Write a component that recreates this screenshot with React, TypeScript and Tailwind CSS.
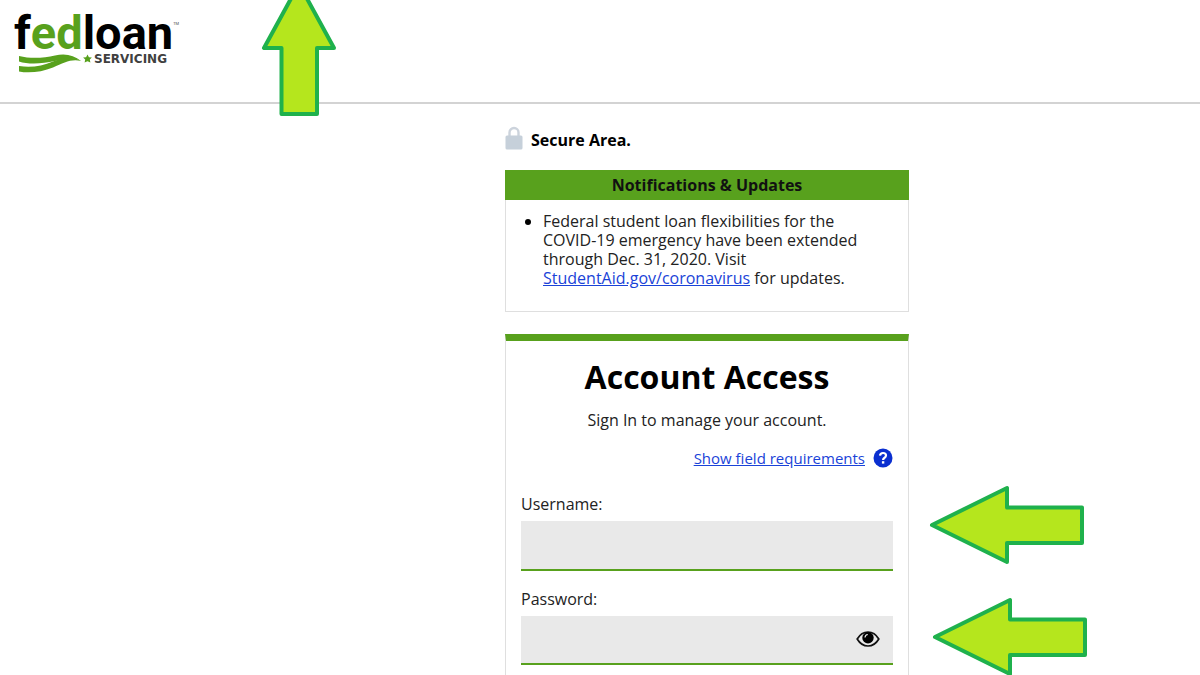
import type { ReactNode } from 'react';

function Logo() {
  return (
    <a href="#home" aria-label="FedLoan Servicing home" className="block w-[166px] text-black no-underline">
      <span className="flex items-start font-['Roboto',sans-serif] text-[47px] leading-[40px] font-bold">
        f<span className="text-[#58a11d]">ed</span>loan
        <span className="font-['Roboto',sans-serif] text-[4px] leading-[22px] font-normal text-neutral-600">TM</span>
      </span>
      <span className="flex items-start">
        <svg viewBox="0 0 78 20" className="h-5 w-[78px] shrink-0" fill="#58a11d" aria-hidden="true">
          <path d="M5 3C17 6 30 5 41 2.500C51 0 60 2 67 8C57 3.500 50 6 41 8C28 11 14 11.500 5 8.500Z" />
          <path d="M5 13C17 15 28 13 39 8.500C49 4.500 58 3 67 8C57 5.500 50 10 39 14.500C28 19 15 20.500 5 18.500Z" />
          <path d="M73.500 1.500L74.900 4.200L77.900 4.500L75.800 6.600L76.400 9.600L73.500 8.200L70.600 9.600L71.200 6.600L69.100 4.500L72.100 4.200Z" />
        </svg>
        <span className="ml-[2px] font-['DejaVu_Sans',sans-serif] text-[12px] leading-[12px] font-bold text-neutral-700">
          SERVICING
        </span>
      </span>
    </a>
  );
}

function UpArrow() {
  return (
    <svg viewBox="0 0 76 118" className="absolute top-0 left-[261px] h-[118px] w-[76px]" aria-hidden="true">
      <path
        d="M38 -16L3 48H20.500V114H56V48H73Z"
        fill="#b5e61d"
        stroke="#1fb14c"
        strokeWidth="4"
        strokeLinejoin="round"
      />
    </svg>
  );
}

function LeftArrow() {
  return (
    <svg viewBox="0 0 156 80" className="h-20 w-[156px]" aria-hidden="true">
      <path
        d="M3 40L78 3V22.500H153V58H78V77Z"
        fill="#b5e61d"
        stroke="#1fb14c"
        strokeWidth="4"
        strokeLinejoin="round"
      />
    </svg>
  );
}

function LockIcon() {
  return (
    <svg viewBox="0 0 18 24" className="h-6 w-[18px]" aria-hidden="true">
      <path d="M4.500 11V6.500a4.500 4.500 0 0 1 9 0V11" fill="none" stroke="#ccd3dc" strokeWidth="2.400" />
      <rect x="0.500" y="9.500" width="17" height="14" rx="1.500" fill="#c6d0da" />
    </svg>
  );
}

function HelpIcon() {
  return (
    <svg viewBox="0 0 20 20" className="h-5 w-5" aria-hidden="true">
      <circle cx="10" cy="10" r="9.500" fill="#0a2fd0" />
      <path
        d="M7 7.700C7.200 5.800 8.400 5 10 5c1.800 0 3 1 3 2.500 0 1.300-.8 1.900-1.700 2.500-.9.600-1.200 1-1.200 2"
        fill="none"
        stroke="#fff"
        strokeWidth="2.200"
      />
      <rect x="8.900" y="13.200" width="2.400" height="2.400" fill="#fff" />
    </svg>
  );
}

function EyeIcon() {
  return (
    <svg viewBox="0 0 24 18" className="h-[18px] w-6" aria-hidden="true">
      <path
        d="M1.200 9C4 4.200 7.700 2 12 2s8 2.200 10.800 7C20 13.800 16.300 16 12 16S4 13.800 1.200 9Z"
        fill="none"
        stroke="#111"
        strokeWidth="1.700"
      />
      <circle cx="12" cy="7.800" r="5.700" fill="#000" />
      <path d="M9 7.500C9.100 5.700 10.100 4.700 11.800 4.500" fill="none" stroke="#e9e9e9" strokeWidth="1.200" />
    </svg>
  );
}

type FieldProps = {
  id: string;
  label: string;
  type: string;
  heightClass: string;
  arrowClass: string;
  children?: ReactNode;
};

function Field({ id, label, type, heightClass, arrowClass, children }: FieldProps) {
  return (
    <div>
      <label htmlFor={id} className="block text-[16px] leading-5">
        {label}
      </label>
      <div className="relative mt-[7px]">
        <input
          id={id}
          type={type}
          className={`block w-full border-b-2 border-[#58a11d] bg-[#e9e9e9] px-3 outline-none ${heightClass}`}
        />
        {children}
        <div className={`absolute left-full ${arrowClass}`}>
          <LeftArrow />
        </div>
      </div>
    </div>
  );
}

export default function App() {
  return (
    <div className="h-screen overflow-hidden bg-white font-['Open_Sans',sans-serif] text-[16px] text-[#222]">
      <header className="relative border-b-2 border-[#d3d3d3] px-[14px] pt-[13px] pb-[29px]">
        <Logo />
        <UpArrow />
      </header>

      <main className="flex justify-center pt-[22px] pl-[214px]">
        <div className="w-full max-w-[404px]">
          <div className="flex items-center gap-2">
            <LockIcon />
            <p className="pt-1 text-[16px] leading-5 font-bold text-black">Secure Area.</p>
          </div>

          <section className="mt-5 border border-[#dfdfdf]">
            <h2 className="-mx-px -mt-px bg-[#58a11d] text-center text-[16px] leading-[30px] font-bold text-[#111]">
              Notifications &amp; Updates
            </h2>
            <ul className="list-disc pt-3 pr-10 pb-[23px] pl-[37px] marker:text-black">
              <li className="text-[16px] leading-[19px]">
                Federal student loan flexibilities for the COVID-19 emergency have been extended through Dec. 31, 2020.
                Visit{' '}
                <a href="#coronavirus" className="text-[#1a43d8] underline">
                  StudentAid.gov/coronavirus
                </a>{' '}
                for updates.
              </li>
            </ul>
          </section>

          <section className="mt-[22px] border border-t-[7px] border-[#dfdfdf] border-t-[#58a11d] px-[15px] pb-10">
            <h1 className="mt-4 text-center text-[32px] leading-10 font-bold text-black">Account Access</h1>
            <p className="mt-[13px] text-center text-[16px] leading-5">Sign In to manage your account.</p>
            <div className="mt-[18px] mb-[26px] flex items-center justify-end gap-2">
              <a href="#requirements" className="text-[15px] leading-5 text-[#1a43d8] underline">
                Show field requirements
              </a>
              <button type="button" aria-label="Help" className="block">
                <HelpIcon />
              </button>
            </div>
            <form className="flex flex-col gap-[18px]">
              <Field
                id="username"
                label="Username:"
                type="text"
                heightClass="h-[50px]"
                arrowClass="-top-9 pl-9"
              />
              <Field
                id="password"
                label="Password:"
                type="password"
                heightClass="h-[49px]"
                arrowClass="-top-[19px] pl-[39px]"
              >
                <button type="button" aria-label="Show password" className="absolute top-[14px] right-[13px] block">
                  <EyeIcon />
                </button>
              </Field>
            </form>
          </section>
        </div>
      </main>
    </div>
  );
}
